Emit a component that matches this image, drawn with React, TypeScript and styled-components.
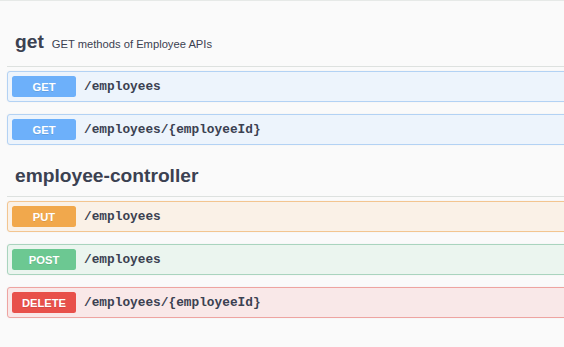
import React from "react";
import styled, { createGlobalStyle } from "styled-components";

const Global = createGlobalStyle`
  html, body { margin: 0; padding: 0; background: #fafafa; overflow: hidden; }
  body { font-family: "Liberation Sans", Arial, sans-serif; color: #3b4151; }
`;

type Method = "GET" | "PUT" | "POST" | "DELETE";

const palette: Record<Method, { badge: string; bg: string; border: string }> = {
  GET: { badge: "#6db0fa", bg: "#edf4fc", border: "#b3d2f4" },
  PUT: { badge: "#f1a84c", bg: "#faf1e7", border: "#f3c590" },
  POST: { badge: "#6cc892", bg: "#ebf5ef", border: "#a9d4be" },
  DELETE: { badge: "#e8504a", bg: "#f9e8e8", border: "#eea4a1" },
};

const Page = styled.div`
  width: 720px;
  border-top: 1px solid #e6e9e7;
  padding: 22px 0 0 7px;
  box-sizing: border-box;
`;

const Section = styled.section`
  display: flex;
  flex-direction: column;
`;

const TagHeader = styled.h3<{ $tall?: boolean }>`
  display: flex;
  align-items: baseline;
  margin: 0 0 4px;
  padding: ${(p) => (p.$tall ? "7.5px 16px 13.5px 8px" : "7.5px 16px 9.5px 8px")};
  border-bottom: 1px solid #dde1df;
  font-size: 19.2px;
  font-weight: 700;
  line-height: 22px;
  color: #3b4151;
`;

const TagDesc = styled.small`
  font-size: 11.2px;
  font-weight: 400;
  line-height: 14px;
  padding: 0 8px;
`;

const Op = styled.div<{ $m: Method }>`
  display: flex;
  align-items: center;
  padding: 4px;
  margin-bottom: 12px;
  border: 1px solid ${(p) => palette[p.$m].border};
  background: ${(p) => palette[p.$m].bg};
  border-radius: 3px;
  box-shadow: 0 0 2px rgba(0, 0, 0, 0.06);
`;

const Badge = styled.span<{ $m: Method }>`
  display: flex;
  align-items: center;
  justify-content: center;
  width: 64px;
  height: 21px;
  border-radius: 2.5px;
  background: ${(p) => palette[p.$m].badge};
  color: #fff;
  font-size: 11.2px;
  font-weight: 700;
  text-shadow: 0 1px 0 rgba(0, 0, 0, 0.1);
`;

const Path = styled.span`
  padding: 0 8px;
  font-family: "Liberation Mono", "Courier New", monospace;
  font-size: 12.8px;
  font-weight: 700;
  color: #3b4151;
`;

const sections: { name: string; desc?: string; ops: [Method, string][] }[] = [
  {
    name: "get",
    desc: "GET methods of Employee APIs",
    ops: [
      ["GET", "/employees"],
      ["GET", "/employees/{employeeId}"],
    ],
  },
  {
    name: "employee-controller",
    ops: [
      ["PUT", "/employees"],
      ["POST", "/employees"],
      ["DELETE", "/employees/{employeeId}"],
    ],
  },
];

export default function App() {
  return (
    <>
      <Global />
      <Page>
        {sections.map((s) => (
          <Section key={s.name}>
            <TagHeader $tall={!!s.desc}>
              <span>{s.name}</span>
              {s.desc && <TagDesc>{s.desc}</TagDesc>}
            </TagHeader>
            {s.ops.map(([m, p]) => (
              <Op key={m + p} $m={m}>
                <Badge $m={m}>{m}</Badge>
                <Path>{p}</Path>
              </Op>
            ))}
          </Section>
        ))}
      </Page>
    </>
  );
}
